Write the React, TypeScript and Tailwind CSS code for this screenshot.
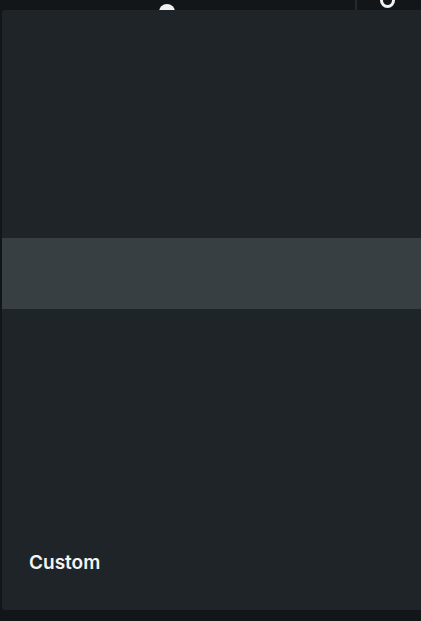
import React from "react";

export default function App() {
  return (
    <div className="w-[421px] h-[621px] bg-[#121619] flex flex-col overflow-hidden" style={{ fontFamily: "Inter, 'Noto Sans', sans-serif" }}>
      <div className="h-[10px] shrink-0 relative overflow-hidden flex">
        <div className="w-[159px] shrink-0" />
        <div className="w-[16px] h-[16px] rounded-full bg-[#f2f2f2] mt-[4px] shrink-0" />
        <div className="w-[180px] shrink-0" />
        <div className="w-[2px] h-[10px] bg-[#23292d] shrink-0" />
        <div className="w-[23px] shrink-0" />
        <div className="w-[15px] h-[18px] rounded-full border-[3px] border-[#f2f2f2] -mt-[10px] shrink-0" />
      </div>
      <div className="ml-[2px] h-[600px] shrink-0 bg-[#1f2428] rounded-l-[3px] flex flex-col">
        <div className="h-[228px] shrink-0" />
        <div className="h-[71px] shrink-0 bg-[#383f43]" />
        <div className="flex-1 flex flex-col justify-end pl-[27px] pb-[35px]">
          <span className="text-[19px] leading-[24px] font-semibold text-[#f4f4f4] tracking-[0px]">Custom</span>
        </div>
      </div>
    </div>
  );
}
